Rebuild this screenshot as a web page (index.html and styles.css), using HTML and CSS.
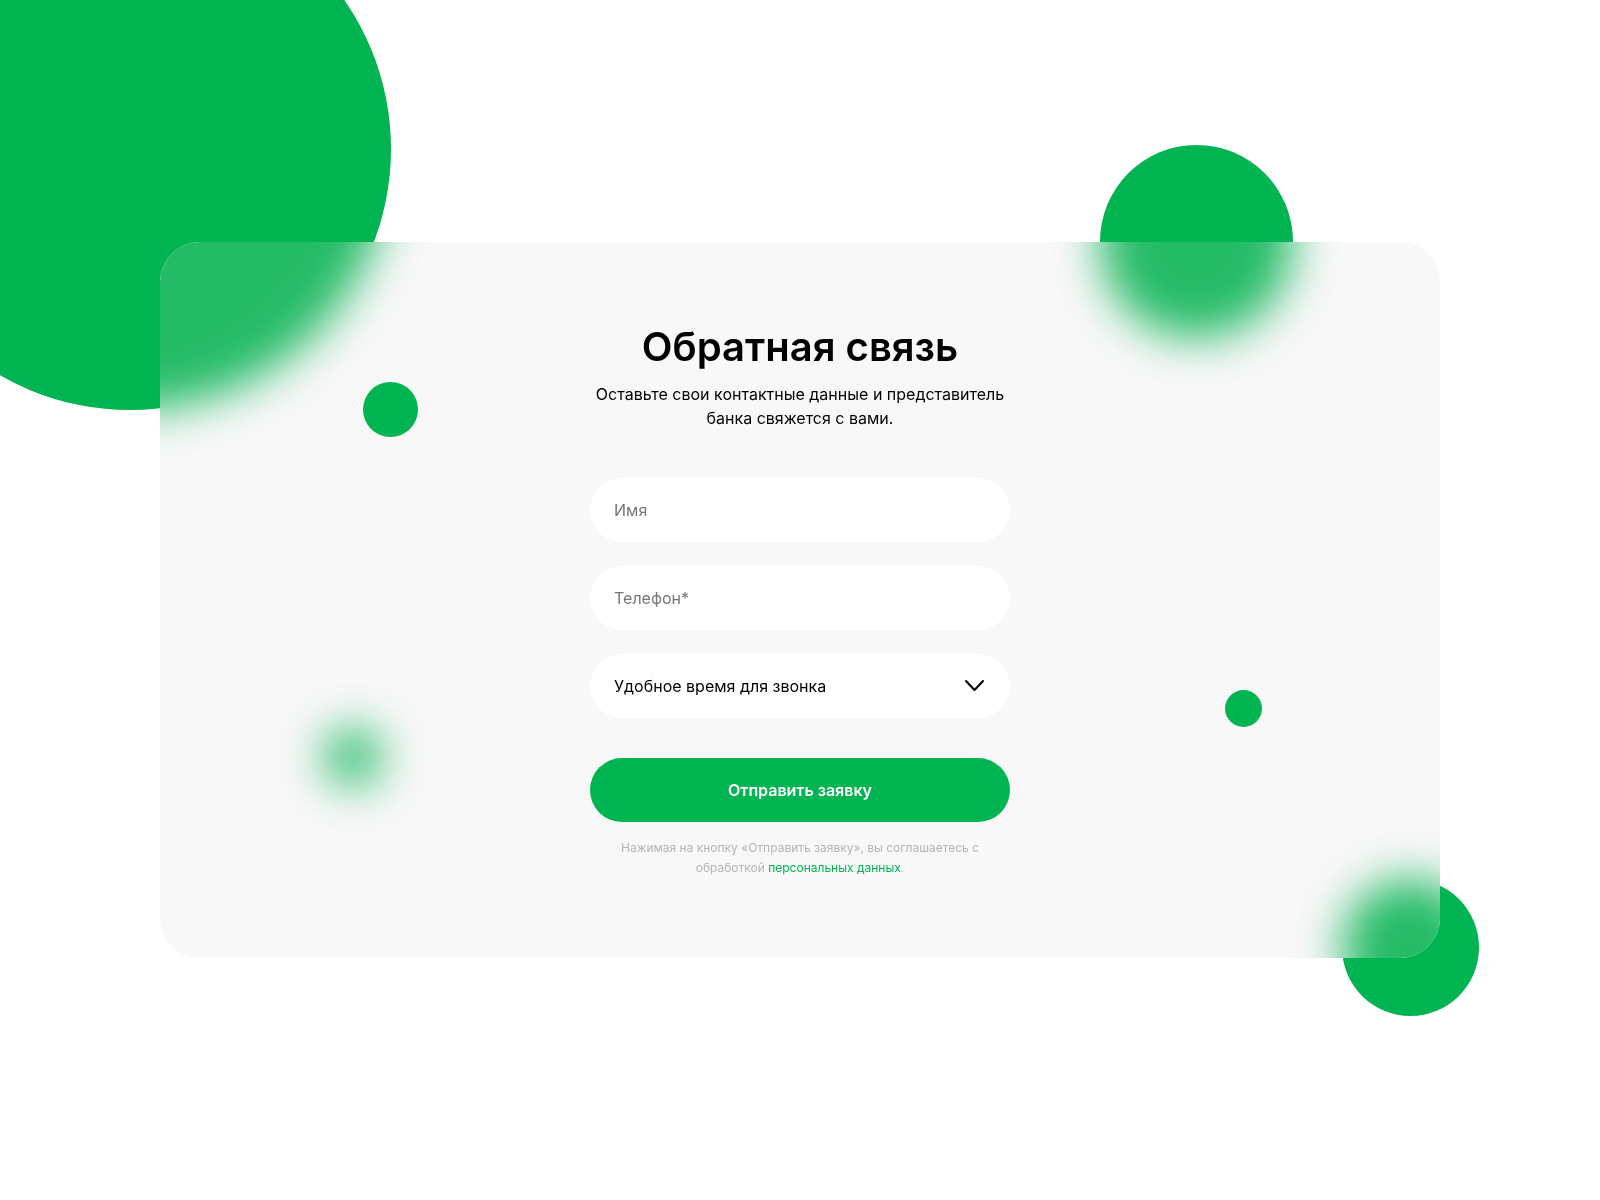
FILE: index.html
```html
<!DOCTYPE html>
<html lang="ru">
<head>
  <meta charset="utf-8">
  <meta name="viewport" content="width=device-width, initial-scale=1">
  <title>Обратная связь</title>
  <link rel="stylesheet" href="styles.css">
</head>
<body>
  <main class="page">
    <section class="feedback">
      <span class="circle circle-huge"></span>
      <span class="circle circle-top"></span>
      <span class="circle circle-bottom"></span>

      <div class="card">
        <div class="glass" aria-hidden="true">
          <span class="circle circle-huge"></span>
          <span class="circle circle-top"></span>
          <span class="circle circle-bottom"></span>
          <span class="circle circle-hidden"></span>
        </div>

        <form class="form">
          <h1 class="title">Обратная связь</h1>
          <p class="lead">Оставьте свои контактные данные и представитель банка свяжется с вами.</p>

          <div class="fields">
            <input class="control" type="text" placeholder="Имя" aria-label="Имя">
            <input class="control" type="tel" placeholder="Телефон*" aria-label="Телефон" required>
            <div class="field">
              <select class="control" aria-label="Удобное время для звонка">
                <option>Удобное время для звонка</option>
              </select>
              <svg class="chevron" viewBox="0 0 24 24" aria-hidden="true">
                <path d="M4 7 12.5 16 21 7"/>
              </svg>
            </div>
          </div>

          <button class="submit" type="submit">Отправить заявку</button>
          <p class="note">Нажимая на кнопку «Отправить заявку», вы соглашаетесь с обработкой <a class="link" href="#">персональных данных</a>.</p>
        </form>
      </div>

      <span class="circle circle-left"></span>
      <span class="circle circle-right"></span>
    </section>
  </main>
</body>
</html>
```

FILE: styles.css
```css
*,
*::before,
*::after {
  box-sizing: border-box;
}

body {
  margin: 0;
  background: #fff;
  color: #000;
  font-family: Inter, "Liberation Sans", sans-serif;
  font-size: 16px;
  line-height: 24px;
}

.page {
  display: flex;
  align-items: center;
  justify-content: center;
  min-height: 100vh;
  overflow: hidden;
}

.feedback {
  position: relative;
  width: 80%;
}

.card {
  position: relative;
  display: flex;
  justify-content: center;
  padding: 80px 24px;
}

/* Frosted glass: soft copies of the circles, cut off by the card's outline */
.glass {
  position: absolute;
  inset: 0;
  background: #f8f8f8;
  clip-path: inset(0 round 40px);
}

.circle {
  position: absolute;
  border-radius: 50%;
  background: #00b551;
}

.glass .circle {
  background: #24bb66;
  filter: blur(23px);
}

.circle-huge {
  top: -354px;
  left: -291px;
  width: 522px;
  height: 522px;
}

.circle-top {
  top: -97px;
  right: 147px;
  width: 193px;
  height: 193px;
}

.circle-bottom {
  right: -39px;
  bottom: -58px;
  width: 137px;
  height: 137px;
}

.circle-hidden {
  bottom: 172px;
  left: 164px;
  width: 58px;
  height: 58px;
}

.circle-left {
  top: 140px;
  left: 203px;
  width: 55px;
  height: 55px;
}

.circle-right {
  top: 448px;
  right: 178px;
  width: 37px;
  height: 37px;
}

.form {
  position: relative;
  display: flex;
  flex-direction: column;
  width: 100%;
  max-width: 420px;
  text-align: center;
  will-change: transform;
}

.title {
  margin: 0 0 10px;
  font-size: 40px;
  font-weight: 600;
  line-height: 50px;
}

.lead {
  margin: 0 0 48px;
}

.fields {
  display: grid;
  gap: 24px;
  margin-bottom: 40px;
}

.field {
  display: grid;
}

.control {
  width: 100%;
  height: 64px;
  padding: 0 24px;
  border: 0;
  border-radius: 32px;
  appearance: none;
  background: #fff;
  color: #000;
  font: inherit;
}

.control::placeholder {
  color: #757575;
}

/* The select and its arrow share one grid cell */
.field .control,
.chevron {
  grid-area: 1 / 1;
}

.chevron {
  place-self: center end;
  width: 24px;
  height: 24px;
  margin-right: 24px;
  fill: none;
  stroke: #000;
  stroke-width: 2;
  stroke-linecap: round;
  stroke-linejoin: round;
  pointer-events: none;
}

.submit {
  height: 64px;
  margin: 0 0 16px;
  padding: 0 24px;
  border: 0;
  border-radius: 32px;
  background: #00b551;
  color: #fff;
  font: inherit;
  font-weight: 600;
  cursor: pointer;
}

.note {
  margin: 0;
  padding: 0 24px;
  color: #b5b5b5;
  font-size: 12px;
  line-height: 20px;
}

.link {
  color: #00b551;
  text-decoration: none;
}
```
